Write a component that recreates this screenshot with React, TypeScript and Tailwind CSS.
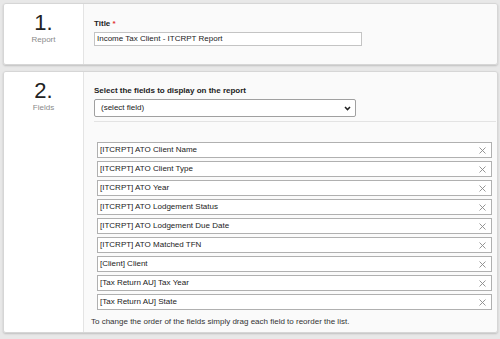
import React from "react";

const items = [
  "[ITCRPT] ATO Client Name",
  "[ITCRPT] ATO Client Type",
  "[ITCRPT] ATO Year",
  "[ITCRPT] ATO Lodgement Status",
  "[ITCRPT] ATO Lodgement Due Date",
  "[ITCRPT] ATO Matched TFN",
  "[Client] Client",
  "[Tax Return AU] Tax Year",
  "[Tax Return AU] State",
];

function XIcon() {
  return (
    <svg width="7" height="7" viewBox="0 0 7 7" className="shrink-0">
      <path d="M0.5 0.5 L6.5 6.5 M6.5 0.5 L0.5 6.5" stroke="#8a8a8a" strokeWidth="0.9" fill="none" />
    </svg>
  );
}

function Chevron() {
  return (
    <svg width="7" height="5" viewBox="0 0 7 5" className="shrink-0">
      <path d="M1 1 L3.5 3.6 L6 1" stroke="#222" strokeWidth="1.5" fill="none" />
    </svg>
  );
}

export default function App() {
  return (
    <div className="min-h-screen w-full bg-[#e8e8e8] pt-[3px] pl-[3px] pr-[2px] text-[8px] leading-[10px] text-[#333] font-['Liberation_Sans',Arial,sans-serif]">
      <div className="flex h-[62px] overflow-hidden rounded-[3px] border border-[#d6d6d6] shadow-[0_1px_2px_rgba(0,0,0,0.18)]">
        <div className="flex w-[80px] shrink-0 flex-col items-center border-r border-[#e4e4e4] bg-white pt-[8px]">
          <div className="text-[22px] leading-[22px] text-[#222]">1.</div>
          <div className="mt-px text-[#8a8a8a]">Report</div>
        </div>
        <div className="flex-1 bg-[#fafafa] pl-[10px] pt-[15px]">
          <div className="font-bold text-[#222]">
            Title <span className="text-[#e03030]">*</span>
          </div>
          <div className="mt-[3px] flex h-[14px] w-[268px] items-center border border-[#c4c4c4] bg-white pl-[2px] leading-[12px] text-[#222]">
            Income Tax Client - ITCRPT Report
          </div>
        </div>
      </div>

      <div className="mt-[6px] flex h-[262px] overflow-hidden rounded-[3px] border border-[#d6d6d6] shadow-[0_1px_2px_rgba(0,0,0,0.18)]">
        <div className="flex w-[80px] shrink-0 flex-col items-center border-r border-[#e4e4e4] bg-white pt-[8px]">
          <div className="text-[22px] leading-[22px] text-[#222]">2.</div>
          <div className="mt-px text-[#8a8a8a]">Fields</div>
        </div>
        <div className="flex-1 bg-[#fafafa] pl-[10px] pt-[14px]">
          <div className="font-bold text-[#222]">Select the fields to display on the report</div>
          <div className="mt-[3px] flex h-[18px] w-[262px] items-center justify-between rounded-[2px] border border-[#a0a0a0] bg-white pl-[6px] pr-[4px] text-[#222]">
            <span>(select field)</span>
            <Chevron />
          </div>
          <div className="mt-[4px] mr-[1px] h-px bg-[#e3e3e3]" />
          <div className="mt-[20px] ml-[3px] mr-[5px] flex flex-col gap-[3px]">
            {items.map((t) => (
              <div
                key={t}
                className="flex h-[16px] items-center justify-between border border-[#b0b0b0] bg-white pl-[2px] pr-[5px] text-[#222]"
              >
                <span>{t}</span>
                <XIcon />
              </div>
            ))}
          </div>
          <div className="mt-[7px] ml-[-3px] text-[#333]">
            To change the order of the fields simply drag each field to reorder the list.
          </div>
        </div>
      </div>
    </div>
  );
}
